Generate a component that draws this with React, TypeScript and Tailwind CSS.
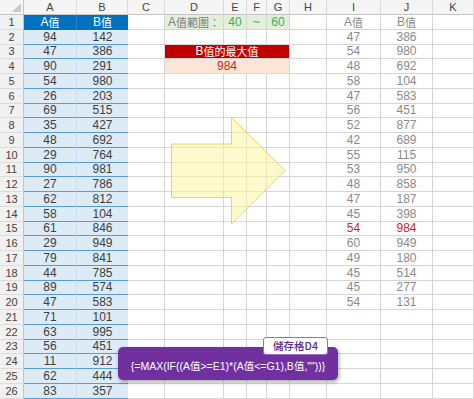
import React from 'react';

const ab: [number, number][] = [
  [94, 142], [47, 386], [90, 291], [54, 980], [26, 203], [69, 515], [35, 427],
  [48, 692], [29, 764], [90, 981], [27, 786], [62, 812], [58, 104], [61, 846],
  [29, 949], [79, 841], [44, 785], [89, 574], [47, 583], [71, 101], [63, 995],
  [56, 451], [11, 912], [62, 444], [83, 357],
];

const ij: [number, number][] = [
  [47, 386], [54, 980], [48, 692], [58, 104], [47, 583], [56, 451], [52, 877],
  [42, 689], [55, 115], [53, 950], [48, 858], [47, 187], [45, 398], [54, 984],
  [60, 949], [49, 180], [45, 514], [45, 277], [54, 131],
];

const cols = ['A', 'B', 'C', 'D', 'E', 'F', 'G', 'H', 'I', 'J', 'K'];

const cell = 'flex items-center justify-center border-r border-b border-[#d6d6d6] leading-[14px] whitespace-nowrap';
const blue = 'flex items-center justify-center bg-[#ddebf7] border-b border-[#5b9bd5] leading-[14px] text-[#404040]';
const cjk = "font-['Noto_Sans_CJK_TC',sans-serif] text-[11px]";

function Row({ r }: { r: number }) {
  const d = ab[r - 2];
  const g = ij[r - 2];
  const gray = r === 15 ? 'text-[#c0282d]' : 'text-[#8a8a8a]';
  return (
    <>
      <div className="flex items-center justify-center bg-[#f1f1f1] border-r border-[#c4c4c4] border-b border-b-[#dcdcdc] text-[11px] text-[#444] leading-[14px]">
        {r}
      </div>
      {r === 1 ? (
        <>
          <div className="flex items-center justify-center bg-[#0070c0] text-white border-r border-[#2d86c9] leading-[14px]">
            <span>A</span><span className={cjk}>值</span>
          </div>
          <div className="flex items-center justify-center bg-[#0070c0] text-white leading-[14px]">
            <span>B</span><span className={cjk}>值</span>
          </div>
        </>
      ) : (
        <>
          <div className={`${blue} border-r border-r-[#c9dcee]`}>{d[0]}</div>
          <div className={blue}>{d[1]}</div>
        </>
      )}
      <div className={cell} />
      {r === 1 ? (
        <>
          <div className={`${cell} bg-[#e2efda] border-[#d2e3c8] text-[#7f7f7f]`}>
            <span>A</span><span className={cjk}>值範圍：</span>
          </div>
          <div className={`${cell} bg-[#e2efda] border-[#d2e3c8] text-[#3cb054]`}>40</div>
          <div className={`${cell} bg-[#e2efda] border-[#d2e3c8] text-[#3cb054]`}>~</div>
          <div className={`${cell} bg-[#e2efda] border-[#d2e3c8] text-[#3cb054]`}>60</div>
        </>
      ) : r === 3 ? (
        <div className={`${cell} col-span-4 bg-[#c00000] border-[#c00000] text-white`}>
          <span>B</span><span className={cjk}>值的最大值</span>
        </div>
      ) : r === 4 ? (
        <div className={`${cell} col-span-4 bg-[#fce4d6] border-[#f3d6c6] text-[#c0282d]`}>984</div>
      ) : (
        <>
          <div className={cell} />
          <div className={cell} />
          <div className={cell} />
          <div className={cell} />
        </>
      )}
      <div className={cell} />
      {r === 1 ? (
        <>
          <div className={`${cell} text-[#8a8a8a]`}><span>A</span><span className={cjk}>值</span></div>
          <div className={`${cell} text-[#8a8a8a]`}><span>B</span><span className={cjk}>值</span></div>
        </>
      ) : g ? (
        <>
          <div className={`${cell} ${gray}`}>{g[0]}</div>
          <div className={`${cell} ${gray}`}>{g[1]}</div>
        </>
      ) : (
        <>
          <div className={cell} />
          <div className={cell} />
        </>
      )}
      <div className={cell} />
    </>
  );
}

export default function App() {
  const rows = Array.from({ length: 26 }, (_, i) => i + 1);
  return (
    <div className="relative w-[474px] h-[399px] overflow-hidden bg-white font-['Liberation_Sans','Noto_Sans_CJK_TC',sans-serif] text-[12px]">
      <div className="grid grid-cols-[24px_53px_51px_37px_59px_23px_20px_23px_37px_54px_52px_41px] grid-rows-[15px_repeat(26,14.75px)]">
        <div className="relative bg-[#f5f5f5] border-r border-b border-[#c4c4c4]">
          <svg className="absolute right-[2px] bottom-[2px]" width="9" height="9" viewBox="0 0 9 9">
            <polygon points="9,0 9,9 0,9" fill="#c9c9c9" />
          </svg>
        </div>
        {cols.map((c) => (
          <div
            key={c}
            className="flex items-center justify-center bg-[#f5f5f5] border-r border-[#dadada] border-b border-b-[#c4c4c4] text-[11px] text-[#444] leading-[14px]"
          >
            {c}
          </div>
        ))}
        {rows.map((r) => (
          <Row key={r} r={r} />
        ))}
      </div>

      <svg className="absolute inset-0 pointer-events-none" width="474" height="399" viewBox="0 0 474 399">
        <polygon
          points="171.5,144 231.5,144 231.5,117.5 285,170.5 231.5,224 231.5,197.5 171.5,197.5"
          fill="rgba(255,246,160,0.55)"
          stroke="#ecd35c"
          strokeWidth="1"
        />
      </svg>

      <div className="absolute left-[118px] top-[347px] w-[220px] h-[33px] rounded-[5px] bg-[#7030a0] shadow-[1px_2px_4px_rgba(0,0,0,0.35)] flex items-center justify-center pt-[5px] text-white text-[10.5px] leading-none whitespace-nowrap">
        {'{=MAX(IF((A'}<span className="font-['Noto_Sans_CJK_TC',sans-serif] text-[10.5px]">值</span>{'>=E1)*(A'}<span className="font-['Noto_Sans_CJK_TC',sans-serif] text-[10.5px]">值</span>{'<=G1),B'}<span className="font-['Noto_Sans_CJK_TC',sans-serif] text-[10.5px]">值</span>{',""))}'}
      </div>
      <div className="absolute left-[263px] top-[337px] w-[65px] h-[18px] rounded-[3px] bg-white border border-[#9a6cc2] flex items-center justify-center text-[#5e2a86] text-[10.5px] font-['Noto_Sans_CJK_TC',sans-serif] font-medium leading-none">
        儲存格D4
      </div>
    </div>
  );
}
